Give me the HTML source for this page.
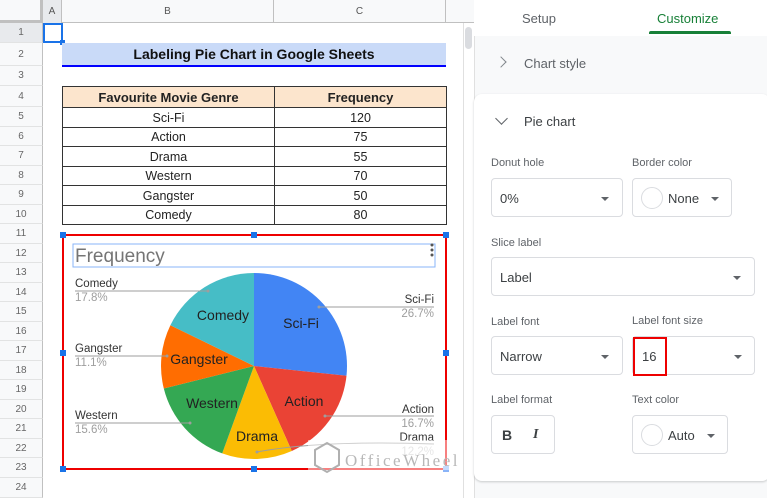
<!DOCTYPE html>
<html><head><style>
*{box-sizing:border-box;margin:0;padding:0}
body{width:767px;height:498px;overflow:hidden;background:#fff;font-family:"Liberation Sans",Arial,sans-serif;position:relative}
.a{position:absolute}
.rh{position:absolute;left:0;width:43px;background:#f8f9fa;border-bottom:1px solid #e2e3e3;border-right:1px solid #c0c0c0;font-size:10px;color:#666;text-align:center}
.lbl{position:absolute;font-size:11px;color:#5f6368}
.box{position:absolute;border:1px solid #dadce0;border-radius:4px;background:#fff;font-size:13px;color:#3c4043}
.caret{position:absolute;width:0;height:0;border-left:4px solid transparent;border-right:4px solid transparent;border-top:4px solid #5f6368}
.circ{position:absolute;width:22px;height:22px;border:1px solid #dadce0;border-radius:50%}
</style></head><body>
<div class="a" style="left:0;top:0;width:474px;height:23px;background:#f8f9fa;border-bottom:1px solid #c0c0c0"></div>
<div class="a" style="left:0;top:0;width:43px;height:23px;border-right:3px solid #c0c0c0;border-bottom:3px solid #c0c0c0;background:#f8f9fa"></div>
<div class="a" style="left:43px;top:0;width:19px;height:23px;background:#e8eaed;border-right:1px solid #c0c0c0;font-size:10px;color:#555;text-align:center;line-height:23px">A</div>
<div class="a" style="left:62px;top:0;width:212px;height:23px;border-right:1px solid #c0c0c0;font-size:10px;color:#555;text-align:center;line-height:23px">B</div>
<div class="a" style="left:274px;top:0;width:172px;height:23px;border-right:1px solid #c0c0c0;font-size:10px;color:#555;text-align:center;line-height:23px">C</div>
<div class="rh" style="top:23px;height:20px;line-height:20px;background:#e8eaed">1</div>
<div class="rh" style="top:43px;height:23px;line-height:23px">2</div>
<div class="rh" style="top:66px;height:20px;line-height:20px">3</div>
<div class="rh" style="top:86px;height:21px;line-height:21px">4</div>
<div class="rh" style="top:107px;height:20px;line-height:20px">5</div>
<div class="rh" style="top:127px;height:19px;line-height:19px">6</div>
<div class="rh" style="top:146px;height:20px;line-height:20px">7</div>
<div class="rh" style="top:166px;height:19px;line-height:19px">8</div>
<div class="rh" style="top:185px;height:20px;line-height:20px">9</div>
<div class="rh" style="top:205px;height:19px;line-height:19px">10</div>
<div class="rh" style="top:224px;height:20px;line-height:20px">11</div>
<div class="rh" style="top:244px;height:19px;line-height:19px">12</div>
<div class="rh" style="top:263px;height:20px;line-height:20px">13</div>
<div class="rh" style="top:283px;height:19px;line-height:19px">14</div>
<div class="rh" style="top:302px;height:20px;line-height:20px">15</div>
<div class="rh" style="top:322px;height:19px;line-height:19px">16</div>
<div class="rh" style="top:341px;height:20px;line-height:20px">17</div>
<div class="rh" style="top:361px;height:19px;line-height:19px">18</div>
<div class="rh" style="top:380px;height:20px;line-height:20px">19</div>
<div class="rh" style="top:400px;height:19px;line-height:19px">20</div>
<div class="rh" style="top:419px;height:20px;line-height:20px">21</div>
<div class="rh" style="top:439px;height:19px;line-height:19px">22</div>
<div class="rh" style="top:458px;height:20px;line-height:20px">23</div>
<div class="rh" style="top:478px;height:20px;line-height:20px">24</div>
<div class="a" style="left:43px;top:23px;width:20px;height:20px;border:2px solid #1a73e8"></div>
<div class="a" style="left:60px;top:40px;width:5px;height:5px;background:#1a73e8"></div>
<div class="a" style="left:463px;top:23px;width:11px;height:475px;background:#fff;border-left:1px solid #e0e0e0"></div>
<div class="a" style="left:465px;top:27px;width:7px;height:22px;background:#dadce0;border-radius:4px"></div>
<div class="a" style="left:62px;top:43px;width:384px;height:22px;background:#c9daf8;font-weight:bold;font-size:14px;text-align:center;line-height:22px;color:#111">Labeling Pie Chart in Google Sheets</div>
<div class="a" style="left:62px;top:65px;width:384px;height:2px;background:#0000ff"></div>
<table class="a" style="left:62px;top:86px;width:385px;border-collapse:collapse;font-size:12.5px;color:#222">
<tr style="height:21px;background:#fce5cd;font-weight:bold;font-size:13px"><td style="border:1px solid #333;width:212px;text-align:center">Favourite Movie Genre</td><td style="border:1px solid #333;text-align:center">Frequency</td></tr>
<tr style="height:20px"><td style="border:1px solid #333;text-align:center">Sci-Fi</td><td style="border:1px solid #333;text-align:center">120</td></tr>
<tr style="height:19px"><td style="border:1px solid #333;text-align:center">Action</td><td style="border:1px solid #333;text-align:center">75</td></tr>
<tr style="height:20px"><td style="border:1px solid #333;text-align:center">Drama</td><td style="border:1px solid #333;text-align:center">55</td></tr>
<tr style="height:19px"><td style="border:1px solid #333;text-align:center">Western</td><td style="border:1px solid #333;text-align:center">70</td></tr>
<tr style="height:20px"><td style="border:1px solid #333;text-align:center">Gangster</td><td style="border:1px solid #333;text-align:center">50</td></tr>
<tr style="height:19px"><td style="border:1px solid #333;text-align:center">Comedy</td><td style="border:1px solid #333;text-align:center">80</td></tr>
</table>
<svg class="a" style="left:0;top:0" width="470" height="498" font-family="Liberation Sans, Arial, sans-serif">
<rect x="63" y="235" width="383" height="234" fill="#fff" stroke="#e00" stroke-width="2"/>
<rect x="73" y="244" width="362" height="23" fill="#fff" stroke="#8ab4f8" stroke-width="1"/>
<text x="75" y="262" font-size="19" fill="#757575">Frequency</text>
<circle cx="432" cy="245" r="1.5" fill="#555"/><circle cx="432" cy="250" r="1.5" fill="#555"/><circle cx="432" cy="255" r="1.5" fill="#555"/>
<path d="M254 366 L254 273 A93 93 0 0 1 346.5 375.7Z" fill="#4285f4"/>
<path d="M254 366 L346.5 375.7 A93 93 0 0 1 291.8 451Z" fill="#ea4335"/>
<path d="M254 366 L291.8 451 A93 93 0 0 1 222.2 453.4Z" fill="#fbbc04"/>
<path d="M254 366 L222.2 453.4 A93 93 0 0 1 163.8 388.5Z" fill="#34a853"/>
<path d="M254 366 L163.8 388.5 A93 93 0 0 1 170.4 325.2Z" fill="#ff6d01"/>
<path d="M254 366 L170.4 325.2 A93 93 0 0 1 254 273Z" fill="#46bdc6"/>
<g font-size="14" fill="#222" text-anchor="middle">
<text x="301" y="328">Sci-Fi</text><text x="223" y="320">Comedy</text><text x="199" y="364">Gangster</text>
<text x="212" y="408">Western</text><text x="304" y="406">Action</text><text x="257" y="441">Drama</text></g>
<g stroke="#9e9e9e" stroke-width="1" fill="none">
<path d="M75 291 H208"/><path d="M319 307 H434"/><path d="M75 356 H167"/><path d="M75 423 H190"/><path d="M325 416 H434"/><path d="M257 452 Q320 440 434 444"/></g>
<g fill="#9e9e9e"><circle cx="208" cy="291" r="1.5"/><circle cx="319" cy="307" r="1.5"/><circle cx="167" cy="356" r="1.5"/><circle cx="190" cy="423" r="1.5"/><circle cx="325" cy="416" r="1.5"/><circle cx="257" cy="452" r="1.5"/></g>
<g font-size="11.5"><text x="75" y="287" fill="#333">Comedy</text><text x="75" y="301" fill="#9e9e9e">17.8%</text>
<text x="75" y="352" fill="#333">Gangster</text><text x="75" y="366" fill="#9e9e9e">11.1%</text>
<text x="75" y="419" fill="#333">Western</text><text x="75" y="433" fill="#9e9e9e">15.6%</text>
<g text-anchor="end"><text x="434" y="303" fill="#333">Sci-Fi</text><text x="434" y="317" fill="#9e9e9e">26.7%</text>
<text x="434" y="413" fill="#333">Action</text><text x="434" y="427" fill="#9e9e9e">16.7%</text>
<text x="434" y="441" fill="#333">Drama</text><text x="434" y="455" fill="#ccc">12.2%</text></g></g>
<g fill="#1a73e8"><rect x="60" y="232" width="6" height="6"/><rect x="251" y="232" width="6" height="6"/><rect x="443" y="232" width="6" height="6"/><rect x="60" y="350" width="6" height="6"/><rect x="443" y="350" width="6" height="6"/><rect x="60" y="466" width="6" height="6"/><rect x="251" y="466" width="6" height="6"/><rect x="443" y="466" width="6" height="6" fill="#8ab4f8"/></g>
<rect x="308" y="440" width="148" height="30" fill="#fff" opacity="0.5"/>
<path d="M327 443 L339 450 L339 465 L327 472 L315 465 L315 450Z" fill="none" stroke="#b0b0b0" stroke-width="2"/>
<text x="345" y="466" font-size="17" fill="#b8b8b8" font-family="Liberation Serif, serif" letter-spacing="2.5">OfficeWheel</text>
</svg>
<div class="a" style="left:474px;top:0;width:293px;height:498px;background:#f8f9fa;border-left:1px solid #e0e0e0"></div>
<div class="a" style="left:474px;top:0;width:293px;height:36px;background:#fff"></div>
<div class="a" style="left:522px;top:11px;font-size:13px;color:#5f6368">Setup</div>
<div class="a" style="left:657px;top:11px;font-size:13px;color:#188038">Customize</div>
<div class="a" style="left:649px;top:31px;width:82px;height:3px;background:#188038;border-radius:2px 2px 0 0"></div>
<div class="a" style="left:497px;top:58px;width:8px;height:8px;border-right:1.5px solid #80868b;border-top:1.5px solid #80868b;transform:rotate(45deg)"></div>
<div class="a" style="left:524px;top:56px;font-size:13px;color:#5f6368">Chart style</div>
<div class="a" style="left:474px;top:94px;width:296px;height:387px;background:#fff;border-radius:8px;box-shadow:0 1px 2px rgba(60,64,67,.25)"></div>
<div class="a" style="left:497px;top:114px;width:9px;height:9px;border-right:1.5px solid #5f6368;border-bottom:1.5px solid #5f6368;transform:rotate(45deg)"></div>
<div class="a" style="left:524px;top:114px;font-size:13px;color:#3c4043">Pie chart</div>
<div class="lbl" style="left:491px;top:157px">Donut hole</div>
<div class="lbl" style="left:632px;top:157px">Border color</div>
<div class="box" style="left:491px;top:178px;width:132px;height:39px"><span class="a" style="left:8px;top:12px">0%</span><span class="caret" style="left:109px;top:18px"></span></div>
<div class="box" style="left:632px;top:178px;width:100px;height:39px"><span class="circ" style="left:8px;top:8px"></span><span class="a" style="left:35px;top:12px">None</span><span class="caret" style="left:78px;top:18px"></span></div>
<div class="lbl" style="left:491px;top:237px">Slice label</div>
<div class="box" style="left:491px;top:257px;width:264px;height:39px"><span class="a" style="left:8px;top:12px">Label</span><span class="caret" style="left:241px;top:18px"></span></div>
<div class="lbl" style="left:491px;top:316px">Label font</div>
<div class="lbl" style="left:632px;top:315px">Label font size</div>
<div class="box" style="left:491px;top:336px;width:132px;height:39px"><span class="a" style="left:8px;top:12px">Narrow</span><span class="caret" style="left:109px;top:18px"></span></div>
<div class="box" style="left:632px;top:336px;width:123px;height:39px"><span class="a" style="left:9px;top:12px">16</span><span class="caret" style="left:101px;top:18px"></span></div>
<div class="a" style="left:633px;top:337px;width:34px;height:39px;border:2px solid #e00"></div>
<div class="lbl" style="left:491px;top:394px">Label format</div>
<div class="lbl" style="left:632px;top:394px">Text color</div>
<div class="box" style="left:491px;top:415px;width:64px;height:39px"><b class="a" style="left:10px;top:11px;font-size:14px">B</b><i class="a" style="left:41px;top:11px;font-size:14px;font-family:'Liberation Serif',serif;font-weight:bold">I</i></div>
<div class="box" style="left:632px;top:415px;width:96px;height:39px"><span class="circ" style="left:8px;top:8px"></span><span class="a" style="left:35px;top:12px">Auto</span><span class="caret" style="left:74px;top:18px"></span></div>
</body></html>
